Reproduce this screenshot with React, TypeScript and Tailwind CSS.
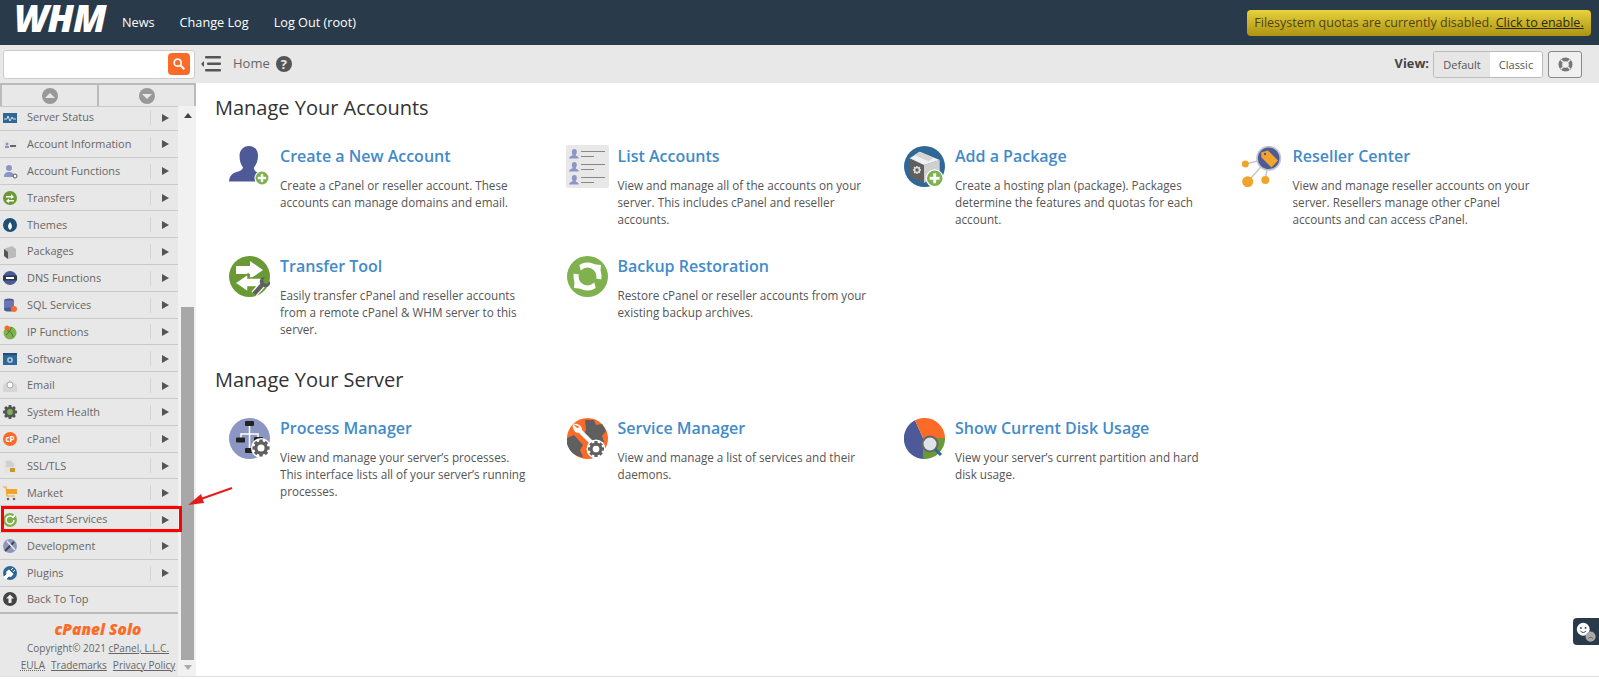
import React from "react"

const font = { fontFamily: '"Open Sans", sans-serif' }

const Gear = ({ cx, cy, r, fill = "#5f5f5f", hole = "#fff" }: { cx: number; cy: number; r: number; fill?: string; hole?: string }) => (
  <g>
    <circle cx={cx} cy={cy} r={r * 0.8} fill={fill} />
    {[0, 45, 90, 135].map((a) => (
      <rect key={a} x={cx - r * 0.2} y={cy - r} width={r * 0.4} height={r * 2} fill={fill} transform={`rotate(${a} ${cx} ${cy})`} />
    ))}
    <circle cx={cx} cy={cy} r={r * 0.42} fill={hole} />
  </g>
)

const PlusBadge = ({ cx, cy, r }: { cx: number; cy: number; r: number }) => (
  <g>
    <circle cx={cx} cy={cy} r={r} fill="#fff" />
    <circle cx={cx} cy={cy} r={r * 0.86} fill="#7fb24f" />
    <rect x={cx - r * 0.55} y={cy - r * 0.16} width={r * 1.1} height={r * 0.32} fill="#fff" />
    <rect x={cx - r * 0.16} y={cy - r * 0.55} width={r * 0.32} height={r * 1.1} fill="#fff" />
  </g>
)

const Person = ({ x = 0, y = 0, s = 1, fill = "#4e5a98" }: { x?: number; y?: number; s?: number; fill?: string }) => (
  <path
    transform={`translate(${x} ${y}) scale(${s})`}
    fill={fill}
    d="M20 0c6 0 9 4.500 9 10 0 5-2 9-4 11.500 0 2 .5 3.500 3 4.500 4 1.500 6 3 7 5l1 4.500H0c.5-4 1.500-7 6-9 5-1.500 7.500-2.500 8-5C12 19 10.500 15 10.500 10 10.500 4.500 14 0 20 0z"
  />
)

const CreateAccountIcon = () => (
  <svg viewBox="0 0 41 41" className="h-[41px] w-[41px]">
    <Person y={0} />
    <PlusBadge cx={33} cy={32} r={7.500} />
  </svg>
)

const ListAccountsIcon = () => (
  <svg viewBox="0 0 43 43" className="-ml-px -mt-px h-[43px] w-[43px]">
    <rect width="43" height="43" rx="2" fill="#e8e8e8" />
    {[4, 17, 30].map((y) => (
      <g key={y}>
        <Person x={3} y={y} s={0.27} fill="#8c96c6" />
        <rect x="15" y={y + 2} width="24" height="1" fill="#888" />
        <rect x="15" y={y + 7} width="13" height="1" fill="#888" />
      </g>
    ))}
  </svg>
)

const PackageIcon = () => (
  <svg viewBox="0 0 41 41" className="h-[41px] w-[41px]">
    <circle cx="20.500" cy="20.500" r="20.500" fill="#2f6896" />
    <path d="M5.700 12.300L20 19v18L5.700 30.700z" fill="#5f5f5f" />
    <path d="M20 19l15.700-5v13L20 37z" fill="#cfcfcf" />
    <path d="M5.700 12.300l10-6.600 20 8.300L20 19z" fill="#f0f0f0" />
    <path d="M10.500 9l5-3.300 14 6-5 3.500z" fill="#d4d4d4" />
    <Gear cx={13} cy={24} r={4} fill="#ddd" hole="#5f5f5f" />
    <PlusBadge cx={30.700} cy={32.300} r={9} />
  </svg>
)

const ResellerIcon = () => (
  <svg viewBox="0 0 41 41" className="h-[41px] w-[41px]">
    <path d="M3.300 18L26.700 12.300M5.700 35.700L26.700 12.300M23.300 34L26.700 12.300" stroke="#c8c8c8" strokeWidth="1.500" />
    <circle cx="3.300" cy="18" r="3.500" fill="#f0a52a" />
    <circle cx="5.700" cy="35.700" r="5.500" fill="#f0a52a" />
    <circle cx="23.300" cy="34" r="4" fill="#f0a52a" />
    <circle cx="26.700" cy="12.300" r="12.500" fill="#c2c4cc" />
    <circle cx="26.700" cy="12.300" r="10.800" fill="#4e5a98" />
    <path d="M19 6.500l7-2 10 10-6.500 7-10-10z" fill="#f0a52a" />
    <circle cx="23" cy="8" r="1.200" fill="#4e5a98" />
  </svg>
)

const TransferIcon = () => (
  <svg viewBox="0 0 41 41" className="h-[41px] w-[41px]">
    <circle cx="20.500" cy="20.500" r="20.500" fill="#6a9a35" />
    <path d="M7 10h14V5l13 9-13 9v-5H7z" fill="#fff" />
    <path d="M34 22H19v-4L6 27l13 9v-5h11z" fill="#fff" stroke="#6a9a35" strokeWidth="1.500" />
    <path d="M25 38l9-10" stroke="#fff" strokeWidth="7" />
    <path d="M25 38l9-10" stroke="#5f5f5f" strokeWidth="4.500" />
    <path d="M31 27c-1-3 1-6 5-6l-2 3 1 3 3 1 3-3c1 4-2 7-6 6z" fill="#5f5f5f" />
  </svg>
)

const RestoreIcon = () => (
  <svg viewBox="0 0 41 41" className="h-[41px] w-[41px]">
    <circle cx="20.500" cy="20.500" r="20.500" fill="#7fb24f" />
    <circle cx="20.500" cy="20.500" r="11.500" fill="#7fb24f" stroke="#fff" strokeWidth="5" />
    <path d="M3 17l9-9 3 11zM38 24l-9 9-3-11z" fill="#7fb24f" />
    <path d="M24 8l10 1-1 11zM17 33l-10-1 1-11z" fill="#fff" />
  </svg>
)

const ProcessIcon = () => (
  <svg viewBox="0 0 41 41" className="h-[41px] w-[41px]">
    <circle cx="20.500" cy="20.500" r="20.500" fill="#8c96c2" />
    <path d="M20.500 8v22M12 21v-5h17v5" stroke="#fff" strokeWidth="1.500" fill="none" />
    <rect x="16" y="3" width="9" height="5" rx="1" fill="#222" />
    <rect x="7" y="19.500" width="9" height="5" rx="1" fill="#222" />
    <rect x="25" y="19" width="9" height="5" rx="1" fill="#222" />
    <rect x="16" y="30" width="9" height="5" rx="1" fill="#222" />
    <circle cx="32" cy="30" r="10" fill="#fff" />
    <Gear cx={32} cy={30} r={8.500} />
  </svg>
)

const ServiceIcon = () => (
  <svg viewBox="0 0 41 41" className="h-[41px] w-[41px]">
    <circle cx="20.500" cy="20.500" r="20.500" fill="#fb6b27" />
    <path d="M18 2h9l2 5 6-1 4 7-4 5 2 6-12 4-9-10 3-6z" fill="#5f5f5f" />
    <path d="M0 20l7-3 9 10-3 5 3 7c-8 0-14-6-16-13z" fill="#5f5f5f" />
    <path d="M6 6c4-1 9 1 9 6l15 15-3 3-15-15c-5 0-7-5-6-9l4 4 3-1z" fill="#fff" />
    <circle cx="29" cy="31" r="9.500" fill="#fff" />
    <Gear cx={29} cy={31} r={8} />
  </svg>
)

const DiskIcon = () => (
  <svg viewBox="0 0 41 41" className="h-[41px] w-[41px]">
    <path d="M11 2.300A20.500 20.500 0 0 0 19 41V20z" fill="#4e5a98" />
    <path d="M11 2.300A20.500 20.500 0 0 1 41 20H19z" fill="#fb6b27" />
    <path d="M19 20h22a20.500 20.500 0 0 1-22 21z" fill="#6a9a35" />
    <circle cx="26" cy="26" r="7.500" fill="#dfe3e6" stroke="#666" strokeWidth="2" />
    <path d="M31 31l6 6" stroke="#2f6896" strokeWidth="3" />
  </svg>
)

const accounts = [
  { title: "Create a New Account", desc: ["Create a cPanel or reseller account. These", "accounts can manage domains and email."], icon: <CreateAccountIcon /> },
  { title: "List Accounts", desc: ["View and manage all of the accounts on your", "server. This includes cPanel and reseller", "accounts."], icon: <ListAccountsIcon /> },
  { title: "Add a Package", desc: ["Create a hosting plan (package). Packages", "determine the features and quotas for each", "account."], icon: <PackageIcon /> },
  { title: "Reseller Center", desc: ["View and manage reseller accounts on your", "server. Resellers manage other cPanel", "accounts and can access cPanel."], icon: <ResellerIcon /> },
  { title: "Transfer Tool", desc: ["Easily transfer cPanel and reseller accounts", "from a remote cPanel & WHM server to this", "server."], icon: <TransferIcon /> },
  { title: "Backup Restoration", desc: ["Restore cPanel or reseller accounts from your", "existing backup archives."], icon: <RestoreIcon /> },
]

const server = [
  { title: "Process Manager", desc: ["View and manage your server’s processes.", "This interface lists all of your server’s running", "processes."], icon: <ProcessIcon /> },
  { title: "Service Manager", desc: ["View and manage a list of services and their", "daemons."], icon: <ServiceIcon /> },
  { title: "Show Current Disk Usage", desc: ["View your server’s current partition and hard", "disk usage."], icon: <DiskIcon /> },
]

const Mini = ({ children }: { children: React.ReactNode }) => (
  <svg viewBox="0 0 16 16" className="h-4 w-4">
    {children}
  </svg>
)

const sideItems: { label: string; icon: React.ReactNode }[] = [
  { label: "Server Status", icon: <Mini><rect x="1" y="3" width="14" height="10" fill="#2f6896" /><path d="M2 9h3l1-3 2 5 2-4 1 2h3" stroke="#fff" strokeWidth=".8" fill="none" /></Mini> },
  { label: "Account Information", icon: <Mini><rect x="1" y="4" width="14" height="9" fill="#e4e4e4" /><circle cx="5" cy="8" r="1.500" fill="#8c96c6" /><rect x="3" y="10" width="4" height="2" fill="#8c96c6" /><rect x="8" y="9" width="6" height="2" fill="#666" /></Mini> },
  { label: "Account Functions", icon: <Mini><circle cx="7" cy="5" r="3" fill="#8c96c6" /><path d="M2 14c0-4 2-5 5-5s5 1 5 5z" fill="#8c96c6" /><circle cx="13" cy="13" r="2" fill="#fff" stroke="#555" /></Mini> },
  { label: "Transfers", icon: <Mini><circle cx="8" cy="8" r="7" fill="#6a9a35" /><path d="M4 6h5V4l3 3-3 2V7.500H4zM12 10H7V8.500L4 11l3 2v-1.500h5z" fill="#fff" /></Mini> },
  { label: "Themes", icon: <Mini><circle cx="8" cy="8" r="7" fill="#1f4f72" /><path d="M8 5c2 3 3 5 0 8-3-3-2-5 0-8z" fill="#fff" /></Mini> },
  { label: "Packages", icon: <Mini><path d="M2 5l8-3 4 3v8l-8 2-4-3z" fill="#bbb" /><path d="M2 5l4 3v7l-4-3z" fill="#555" /></Mini> },
  { label: "DNS Functions", icon: <Mini><circle cx="8" cy="8" r="7" fill="#4e5a98" /><rect x="1" y="5.500" width="14" height="5" fill="#293a4a" /><rect x="4" y="7" width="8" height="2" fill="#fff" /></Mini> },
  { label: "SQL Services", icon: <Mini><ellipse cx="7" cy="3.500" rx="5" ry="2" fill="#4e5a98" /><rect x="2" y="3.500" width="10" height="9" fill="#6c76ae" /><ellipse cx="7" cy="12.500" rx="5" ry="2" fill="#4e5a98" /><circle cx="12" cy="12" r="3" fill="#fb6b27" /></Mini> },
  { label: "IP Functions", icon: <Mini><circle cx="8" cy="9" r="6.500" fill="#7fb24f" /><path d="M5 6c3 1 5 3 6 7M10 3c-2 3-3 6-6 8" stroke="#4f7a2a" fill="none" /><circle cx="5" cy="4" r="2.500" fill="#fb6b27" /></Mini> },
  { label: "Software", icon: <Mini><rect x="1" y="2" width="14" height="12" fill="#2f6896" /><rect x="1" y="2" width="14" height="2" fill="#1f4f72" /><circle cx="8" cy="9" r="3" fill="#9fc2dc" /><circle cx="8" cy="9" r="1.200" fill="#2f6896" /></Mini> },
  { label: "Email", icon: <Mini><path d="M1 7l7-5 7 5v7H1z" fill="#d6d6d6" /><circle cx="8" cy="7" r="3" fill="#fff" stroke="#aaa" /></Mini> },
  { label: "System Health", icon: <Mini><Gear cx={8} cy={8} r={7} fill="#555" hole="#7fb24f" /></Mini> },
  { label: "cPanel", icon: <Mini><circle cx="8" cy="8" r="7" fill="#fb6b27" /><text x="8" y="11" textAnchor="middle" fontSize="8" fontWeight="700" fill="#fff" style={font}>cP</text></Mini> },
  { label: "SSL/TLS", icon: <Mini><path d="M2 1h9l3 3v11H2z" fill="#e4e4e4" /><path d="M4 4h6M4 6h8M4 8h8" stroke="#bbb" /><rect x="8" y="10" width="5" height="4" fill="#c9972c" /></Mini> },
  { label: "Market", icon: <Mini><path d="M1 2h3l1 9h8" stroke="#f0a52a" fill="none" strokeWidth="1.200" /><rect x="5" y="4" width="10" height="5" fill="#f0a52a" /><circle cx="6" cy="14" r="1.300" fill="#666" /><circle cx="12" cy="14" r="1.300" fill="#666" /></Mini> },
  { label: "Restart Services", icon: <Mini><circle cx="8" cy="8" r="7" fill="#7fb24f" /><path d="M11.500 6a4 4 0 1 0 .5 2" stroke="#fff" strokeWidth="1.400" fill="none" /><path d="M10 5h3V2z" fill="#fff" /></Mini> },
  { label: "Development", icon: <Mini><circle cx="8" cy="8" r="7" fill="#8c96c2" /><path d="M3 13L12 4" stroke="#444" strokeWidth="2" /><path d="M5 3l8 9" stroke="#eee" strokeWidth="1.500" /></Mini> },
  { label: "Plugins", icon: <Mini><circle cx="8" cy="8" r="7" fill="#2f6896" /><path d="M2 12l3-3c-1-2 0-3 2-4l4 4c-1 2-2 3-4 2l-3 3zM9 5l2-2M11 7l2-2" stroke="#fff" fill="#fff" /></Mini> },
]

const Card = ({ title, desc, icon }: { title: string; desc: string[]; icon: React.ReactNode }) => (
  <div className="flex">
    <div className="w-[51px] shrink-0">{icon}</div>
    <div>
      <div className="h-[21px] text-[16px] font-semibold leading-[21px] text-[#428bca]">{title}</div>
      <div className="mt-[10px] text-[11.700px] leading-[17px] text-[#555]">
        {desc.map((line) => (
          <div key={line} className="whitespace-nowrap">
            {line}
          </div>
        ))}
      </div>
    </div>
  </div>
)

const TopBar = () => (
  <div className="flex h-[45px] items-center bg-[#293a4a] pl-[14px] pr-2">
    <span className="mb-[9px] w-[108px] text-[37px] font-extrabold italic leading-[36px] tracking-[-1px] text-white">WHM</span>
    <nav className="flex items-center gap-[25px] text-[12.700px] text-white">
      <a>News</a>
      <a>Change Log</a>
      <a>Log Out (root)</a>
    </nav>
    <div className="ml-auto h-[26px] w-[344px] rounded-[4px] bg-gradient-to-b from-[#e8d23c] to-[#ad930f] text-center text-[12.500px] leading-[26px] text-[#4d4318]">
      Filesystem quotas are currently disabled. <a className="text-[#2b2b1c] underline">Click to enable.</a>
    </div>
  </div>
)

const Sidebar = () => (
  <aside className="relative flex w-[196px] shrink-0 flex-col bg-[#f1f1f1]">
    <div className="flex h-[38px] items-center bg-[#e8e8e8] pl-[3px]">
      <div className="flex h-[29px] w-[192px] items-center justify-end rounded-[3px] border border-[#ccc] bg-white pr-[4px]">
        <div className="flex h-[22px] w-[22px] items-center justify-center rounded-[4px] bg-[#fb6b27]">
          <svg viewBox="0 0 16 16" className="h-[14px] w-[14px]" fill="none" stroke="#fff" strokeWidth="2">
            <circle cx="6.500" cy="6.500" r="4" />
            <path d="M9.500 9.500L14 14" strokeWidth="2.500" />
          </svg>
        </div>
      </div>
    </div>
    <div className="flex h-[23px] bg-[#e8e8e8]">
      <div className="flex flex-1 items-center justify-center border-2 border-b-0 border-[#bbb]">
        <svg viewBox="0 0 16 16" className="h-4 w-4">
          <circle cx="8" cy="8" r="8" fill="#999" />
          <path d="M8 5l5 5H3z" fill="#e8e8e8" />
        </svg>
      </div>
      <div className="flex flex-1 items-center justify-center border-t-2 border-r-2 border-[#bbb]">
        <svg viewBox="0 0 16 16" className="h-4 w-4">
          <circle cx="8" cy="8" r="8" fill="#999" />
          <path d="M8 11L3 6h10z" fill="#e8e8e8" />
        </svg>
      </div>
    </div>
    <div className="flex flex-1">
      <div className="flex w-[178px] flex-col bg-[#e8e8e8]">
        {sideItems.map((item, i) => (
          <div
            key={item.label}
            className={`flex items-center border-b-[1px] border-[#c9c9c9] pl-[2px] ${i === 0 ? "h-[25px] border-t border-t-[#c9c9c9] pb-[2px]" : "h-[26.800px] pt-[1px]"}`}
          >
            <span className="flex w-[25px] shrink-0">{item.icon}</span>
            <span className="w-[123px] text-[10.900px] text-[#666]">{item.label}</span>
            <span className="h-[15px] border-l border-[#d4d4d4]" />
            <span className="ml-[11px] h-0 w-0 border-y-[4px] border-l-[7px] border-y-transparent border-l-[#555]" />
          </div>
        ))}
        <div className="flex h-[27px] items-center border-b-2 border-[#bbb] pl-[3px]">
          <span className="flex w-[24px] shrink-0">
            <svg viewBox="0 0 14 14" className="h-[14px] w-[14px]">
              <circle cx="7" cy="7" r="7" fill="#444" />
              <path d="M7 2.500l4 4H8.500V11h-3V6.500H3z" fill="#eee" />
            </svg>
          </span>
          <span className="text-[10.900px] text-[#666]">Back To Top</span>
        </div>
        <div className="flex flex-1 flex-col items-center pl-[18px] text-[10px] text-[#666]">
          <span className="mt-[6px] whitespace-nowrap text-[15.500px] font-extrabold italic leading-[18px] text-[#fb6b27]">cPanel Solo</span>
          <span className="mt-[2px] whitespace-nowrap leading-[16px]">
            Copyright© 2021 <a className="underline">cPanel, L.L.C.</a>
          </span>
          <div className="mt-[1px] flex gap-[6px] whitespace-nowrap leading-[16px]">
            <a className="underline decoration-dotted">EULA</a>
            <a className="underline">Trademarks</a>
            <a className="underline">Privacy Policy</a>
          </div>
        </div>
      </div>
      <div className="flex w-[18px] flex-col">
        <div className="flex h-[201px] justify-center pl-[1px] pt-[7px]">
          <span className="h-0 w-0 border-x-[4px] border-b-[5px] border-x-transparent border-b-[#444]" />
        </div>
        <div className="ml-[3px] h-[353px] w-[13px] bg-[#a8a8a8]" />
        <div className="flex justify-center pl-[1px] pt-[5px]">
          <span className="h-0 w-0 border-x-[4px] border-t-[5px] border-x-transparent border-t-[#aaa]" />
        </div>
      </div>
    </div>
    {/* red annotation over the Restart Services row */}
    <div className="absolute left-[1px] top-[461px] h-[26px] w-[181px] border-[3px] border-[#f00]" />
  </aside>
)

const Section = ({ title, items, className }: { title: string; items: typeof accounts; className: string }) => (
  <section className={className}>
    <h2 className="text-[20px] leading-[28px] text-[#333]">{title}</h2>
    <div className="mt-[24px] grid grid-cols-[337.500px_337.500px_337.500px_337.500px] gap-y-[28px] pl-[14px]">
      {items.map((item) => (
        <Card key={item.title} {...item} />
      ))}
    </div>
  </section>
)

const App: React.FC = () => (
  <div className="relative h-[679px] w-[1599px] overflow-hidden bg-white" style={font}>
    <TopBar />
    <div className="flex h-[631px]">
      <Sidebar />
      <main className="flex-1">
        <div className="flex h-[38px] items-center bg-[#e8e8e8] pl-[5px] pr-[17px]">
          <svg viewBox="0 0 20 16" className="h-4 w-5" fill="#555">
            <path d="M0 8l3-3v6z" />
            <rect x="4" y="0" width="16" height="2.500" rx="1" />
            <rect x="6" y="6.500" width="14" height="2.500" rx="1" />
            <rect x="4" y="13" width="16" height="2.500" rx="1" />
          </svg>
          <span className="ml-[12px] text-[13px] text-[#666]">Home</span>
          <span className="ml-[6px] flex h-4 w-4 items-center justify-center rounded-full bg-[#555] text-[13px] font-bold leading-none text-[#e8e8e8]">?</span>
          <span className="ml-auto text-[12.800px] font-bold text-[#444]">View:</span>
          <div className="ml-[4px] flex h-[27px] w-[110px] overflow-hidden rounded-[3px] border border-[#bbb] text-[11px] leading-[25px] text-[#555]">
            <span className="w-[56px] bg-[#e6e6e6] text-center">Default</span>
            <span className="flex-1 bg-white text-center">Classic</span>
          </div>
          <div className="ml-[5px] flex h-[27px] w-[34px] items-center justify-center rounded-[3px] border border-[#888] bg-[#f0f0f0]">
            <svg viewBox="0 0 16 16" className="h-[15px] w-[15px]">
              <circle cx="8" cy="8" r="5.500" fill="none" stroke="#777" strokeWidth="4" />
              <path d="M3 3l3 3M13 3l-3 3M3 13l3-3M13 13l-3-3" stroke="#f0f0f0" strokeWidth="1.500" />
            </svg>
          </div>
        </div>
        <Section title="Manage Your Accounts" items={accounts} className="pl-[19px] pt-[11px]" />
        <Section title="Manage Your Server" items={server} className="pl-[19px] pt-[28px]" />
      </main>
    </div>
    {/* pointer arrow drawn over the page */}
    <svg viewBox="0 0 50 22" className="absolute left-[186px] top-[486px] h-[22px] w-[50px]">
      <path d="M46 2L12 14" stroke="#e61c1c" strokeWidth="2" />
      <path d="M2 19L15 8l3 9z" fill="#e61c1c" />
    </svg>
    <div className="absolute right-0 top-[618px] flex h-[27px] w-[26px] items-center justify-center rounded-l-[4px] bg-[#293a4a]">
      <svg viewBox="0 0 24 24" className="h-[22px] w-[22px]">
        <circle cx="9" cy="9" r="7" fill="#fff" />
        <circle cx="6.500" cy="7.500" r="1" fill="#293a4a" />
        <circle cx="11.500" cy="7.500" r="1" fill="#293a4a" />
        <path d="M6 11c2 2 4 2 6 0" stroke="#293a4a" fill="none" />
        <circle cx="17" cy="17" r="5.500" fill="#aaa" />
        <path d="M14.500 19c2-1.500 3-1.500 5 0" stroke="#555" fill="none" />
      </svg>
    </div>
    <div className="absolute bottom-[2px] left-0 h-px w-full bg-[#e0e0e0]" />
  </div>
)

export default App
